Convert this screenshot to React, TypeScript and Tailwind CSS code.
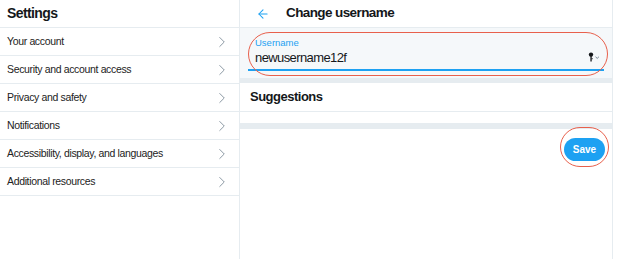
import { ChevronRight, ArrowLeft } from 'lucide-react';

const items = [
  'Your account',
  'Security and account access',
  'Privacy and safety',
  'Notifications',
  'Accessibility, display, and languages',
  'Additional resources',
];

const KeyIcon = () => (
  <svg width="12" height="10" viewBox="0 0 12 10" className="text-[#14171a]">
    <circle cx="3" cy="2.6" r="2.2" fill="currentColor" />
    <rect x="2.4" y="4" width="1.3" height="5.5" fill="currentColor" />
    <rect x="3.5" y="6.2" width="1.2" height="1" fill="currentColor" />
    <path d="M7.5 4.8 L9.2 6.4 L10.9 4.8" stroke="#657786" strokeWidth="0.9" fill="none" />
  </svg>
);

const App = () => {
  return (
    <div
      className="flex w-[640px] h-[259px] bg-white text-[#14171a] overflow-hidden"
      style={{ fontFamily: '"Liberation Sans", Arial, sans-serif' }}
    >
      <div className="w-[240px] h-full border-r border-[#e6ecf0] flex flex-col">
        <div className="h-[28px] flex items-center px-[7px] border-b border-[#e6ecf0]">
          <h1 className="text-[14px] font-bold tracking-[-0.6px]">Settings</h1>
        </div>
        {items.map((item) => (
          <div
            key={item}
            className="h-[28px] flex items-center justify-between pl-[7px] pr-[8px] border-b border-[#e6ecf0]"
          >
            <span className="text-[10.5px] tracking-[-0.35px] text-[#222]">{item}</span>
            <ChevronRight size={18} strokeWidth={1} className="text-[#657786]" />
          </div>
        ))}
      </div>

      <div className="w-[373px] h-full border-r border-[#e6ecf0] flex flex-col">
        <div className="h-[28px] flex items-center border-b border-[#e6ecf0]">
          <div className="w-[46px] flex justify-center">
            <ArrowLeft size={14} strokeWidth={1.8} className="text-[#1da1f2]" />
          </div>
          <h2 className="text-[13.5px] font-bold tracking-[-0.6px]">Change username</h2>
        </div>

        <div className="relative h-[50px] bg-[#f5f8fa] px-[8px] pt-[9px]">
          <div className="h-[34px] border-b-2 border-[#1da1f2] flex items-end justify-between pl-[7px] pr-[4px] pb-[3px]">
            <div className="flex flex-col">
              <span className="text-[9.5px] leading-[12px] text-[#1da1f2]">Username</span>
              <span className="text-[13px] leading-[17px] tracking-[-0.6px]">newusername12f</span>
            </div>
            <div className="pb-[4px]">
              <KeyIcon />
            </div>
          </div>
          <div className="absolute left-[8px] top-[4px] w-[360px] h-[44px] rounded-full border-[1.5px] border-[#e8604c]" />
        </div>
        <div className="h-[5px] bg-[#e6ecf0]" />

        <div className="h-[29px] flex items-center px-[10px] border-b border-[#e6ecf0]">
          <h3 className="text-[13px] font-bold tracking-[-0.5px]">Suggestions</h3>
        </div>
        <div className="h-[11px]" />
        <div className="h-[6px] bg-[#e6ecf0]" />

        <div className="flex justify-end pr-[7px] pt-[7px]">
          <div className="relative">
            <button className="w-[41px] h-[23px] rounded-full bg-[#1da1f2] text-white text-[10px] font-bold">
              Save
            </button>
            <div className="absolute left-[-4px] top-[-9px] w-[49px] h-[40px] rounded-full border-[1.5px] border-[#e8604c]" />
          </div>
        </div>
      </div>
    </div>
  );
};

export default App;
